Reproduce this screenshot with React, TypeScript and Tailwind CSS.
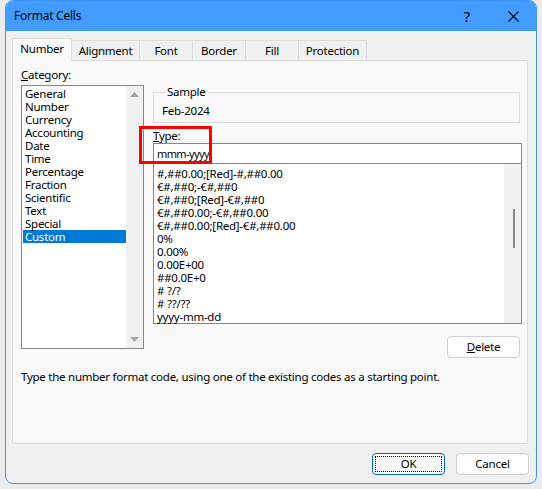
import React from "react";

const cats = ["General","Number","Currency","Accounting","Date","Time","Percentage","Fraction","Scientific","Text","Special","Custom"];
const codes = ["#,##0.00;[Red]-#,##0.00","€#,##0;-€#,##0","€#,##0;[Red]-€#,##0","€#,##0.00;-€#,##0.00","€#,##0.00;[Red]-€#,##0.00","0%","0.00%","0.00E+00","##0.0E+0","# ?/?","# ??/??","yyyy-mm-dd"];
const tabs = [
  { label: "Alignment", w: "w-[69px]" },
  { label: "Font", w: "w-[54px]" },
  { label: "Border", w: "w-[54px]" },
  { label: "Fill", w: "w-[54px]" },
  { label: "Protection", w: "w-[69px]" },
];

export default function App() {
  return (
    <div className="w-[542px] h-[489px] bg-[#ebebeb] pl-[5px] overflow-hidden text-black font-['Noto_Sans',sans-serif] text-[11.5px] tracking-[-0.25px] leading-[16px]">
      <div className="w-[532px] h-[484px] flex flex-col rounded-[8px] border border-[#3e95f6] bg-[#f0f0f0] overflow-hidden">
        {/* title bar */}
        <div className="h-[30px] bg-[#429cff] flex items-center pl-[8px] shrink-0">
          <span className="text-[12px]">Format Cells</span>
          <div className="ml-auto flex h-full">
            <div className="w-[46px] h-full flex items-center justify-center text-[15px]">?</div>
            <div className="w-[46px] h-full flex items-center justify-center">
              <svg width="11" height="11" viewBox="0 0 11 11">
                <path d="M0.5 0.5L10.5 10.5M10.5 0.5L0.5 10.5" stroke="#000" strokeWidth="1.1" />
              </svg>
            </div>
          </div>
        </div>
        {/* body */}
        <div className="flex flex-col pl-[6px] pr-[6px] pt-[7px]">
          <div className="flex items-end h-[22px]">
            <div className="w-[60px] h-[23px] -mb-px relative z-10 bg-[#f9f9f9] border border-b-0 border-[#dcdcdc] flex items-center justify-center pb-[2px]">Number</div>
            {tabs.map((t) => (
              <div key={t.label} className={`${t.w} h-[20px] -ml-px border border-b-0 border-[#dcdcdc] flex items-center justify-center`}>{t.label}</div>
            ))}
          </div>
          <div className="w-[516px] h-[384px] bg-[#f9f9f9] border border-[#dcdcdc] pl-[8px] pt-[6px] flex flex-col">
            <div className="flex gap-[9px]">
              {/* left column */}
              <div className="flex flex-col w-[123px]">
                <div className="mb-[2px]"><span className="underline">C</span>ategory:</div>
                <div className="h-[264px] bg-white border border-[#828790] flex">
                  <div className="flex-1 pt-[1px] pl-[1px]">
                    {cats.map((c) => (
                      <div key={c} className={`h-[13px] leading-[13px] pl-[2px] ${c === "Custom" ? "bg-[#0078d7] text-white" : ""}`}>{c}</div>
                    ))}
                  </div>
                  <div className="w-[17px] bg-[#f0f0f0] flex flex-col justify-between">
                    <div className="h-[17px] flex items-center justify-center">
                      <svg width="9" height="5" viewBox="0 0 9 5"><path d="M4.5 0L9 5H0Z" fill="#a3a3a3" /></svg>
                    </div>
                    <div className="h-[17px] flex items-center justify-center">
                      <svg width="9" height="5" viewBox="0 0 9 5"><path d="M0 0H9L4.5 5Z" fill="#a3a3a3" /></svg>
                    </div>
                  </div>
                </div>
              </div>
              {/* right column */}
              <div className="flex flex-col w-[369px] pt-[18px]">
                <fieldset className="w-[367px] h-[38px] border border-[#dcdcdc] pl-[8px]">
                  <legend className="ml-[3px] px-[2px] leading-[14px]">Sample</legend>
                  <div className="mt-[4px]">Feb-2024</div>
                </fieldset>
                <div className="relative mt-[6px]">
                  <div className="absolute left-[-14px] top-[-3px] w-[73px] h-[38px] border-[3px] border-[#ff0000] z-10 pointer-events-none" />
                  <div className="leading-[14px]"><span className="underline">T</span>ype:</div>
                  <div className="h-[21px] bg-white border border-[#868686] pl-[3px] flex items-center">
                    <span className="text-[11px] tracking-[-0.6px]">mmm-yyyy</span>
                  </div>
                </div>
                <div className="h-[160px] bg-white border border-t-0 border-[#868686] flex">
                  <div className="flex-1 pt-[3px] pl-[3px]">
                    {codes.map((c) => (
                      <div key={c} className="h-[13px] leading-[13px] whitespace-nowrap">{c}</div>
                    ))}
                  </div>
                  <div className="w-[17px] bg-[#f0f0f0] flex flex-col items-center pt-[45px]">
                    <div className="w-[2px] h-[39px] bg-[#8a8a8a] ml-[2px]" />
                  </div>
                </div>
                <div className="flex justify-end pr-[2px] mt-[12px]">
                  <div className="w-[73px] h-[22px] rounded-[4px] border border-[#d0d0d0] bg-[#fdfdfd] flex items-center justify-center">
                    <span><span className="underline">D</span>elete</span>
                  </div>
                </div>
              </div>
            </div>
            <div className="mt-[11px]">Type the number format code, using one of the existing codes as a starting point.</div>
          </div>
          <div className="flex justify-end gap-[11px] pr-[1px] mt-[9px]">
            <div className="w-[73px] h-[22px] rounded-[4px] border border-[#0067c0] bg-[#fdfdfd] p-[2px]">
              <div className="w-full h-full border border-dotted border-black flex items-center justify-center">OK</div>
            </div>
            <div className="w-[73px] h-[22px] rounded-[4px] border border-[#d0d0d0] bg-[#fdfdfd] flex items-center justify-center">Cancel</div>
          </div>
        </div>
      </div>
    </div>
  );
}
